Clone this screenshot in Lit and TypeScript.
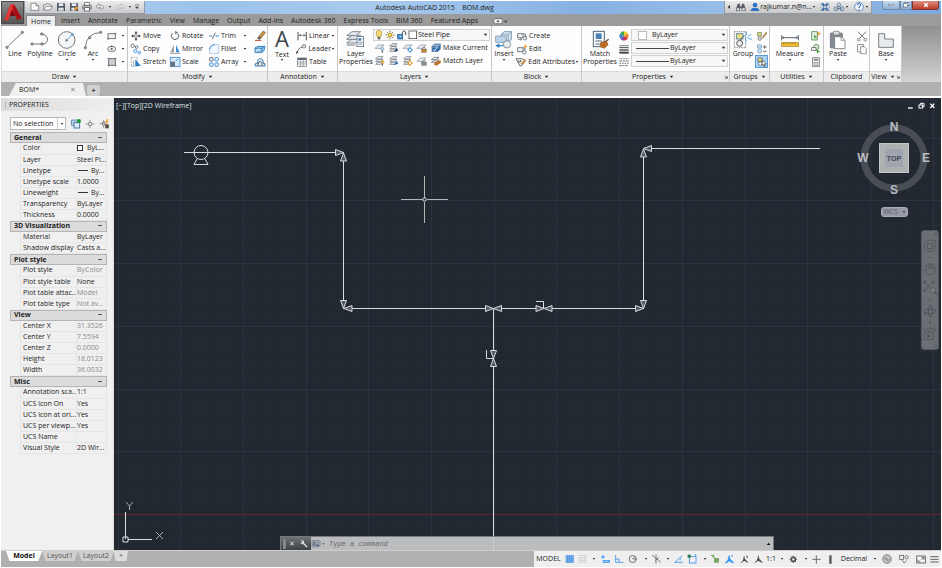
import { LitElement, html, svg, css } from "lit";
import { customElement, property } from "lit/decorators.js";
import { classMap } from "lit/directives/class-map.js";

/* ---------- icon artwork, drawn on a grid of three units per pixel ---------- */

type Art = [number, number, unknown];
const G = "#5d6670";
const B = "#3f8fd8";

const ICONS: Record<string, Art> = {
  logo: [60, 60, svg`<path d="M4 52 L22 6 Q28 0 34 6 L56 46 L42 50 L37 38 L20 40 L15 52Z" fill="#c5161d"/><path d="M22 6 Q28 0 34 6 L40 17 L27 20 L15 52 L4 52Z" fill="#e4383b"/><path d="M27 20 L20 40 L37 38Z" fill="#7d0d12"/><path d="M34 6 L56 46 L42 50 L28 12Z" fill="#a80f16"/>`],
  new: [30, 30, svg`<path d="M3 4H18L26 12V25H3Z" fill="#fff" stroke="#666" stroke-width="2"/><path d="M18 4V12H26" fill="none" stroke="#666" stroke-width="2"/>`],
  open: [30, 30, svg`<path d="M2 24V9L14 5L24 9V13" fill="#eee" stroke="#666" stroke-width="2"/><path d="M2 24L9 13H29L21 24Z" fill="#f8f8f8" stroke="#666" stroke-width="2"/>`],
  save: [30, 30, svg`<path d="M3 3H25L27 5V27H3Z" fill="#4d555f"/><rect x="8" y="4" width="14" height="8" fill="#eef"/><rect x="7" y="17" width="16" height="9" fill="#dfe3e8"/>`],
  saveas: [30, 30, svg`<path d="M3 3H25L27 5V27H3Z" fill="#4d555f"/><rect x="8" y="4" width="14" height="8" fill="#eef"/><rect x="7" y="17" width="12" height="9" fill="#dfe3e8"/><path d="M14 20L24 13L28 18L18 26Z" fill="#e89a3a"/>`],
  print: [30, 30, svg`<rect x="8" y="2" width="14" height="9" fill="#fff" stroke="#555" stroke-width="2"/><rect x="2" y="10" width="26" height="12" rx="3" fill="#bbb" stroke="#444" stroke-width="2"/><rect x="7" y="17" width="16" height="10" fill="#fff" stroke="#444" stroke-width="2"/>`],
  undo: [30, 30, svg`<path d="M12 5L3 13L12 21V16Q20 15 19 24Q28 20 25 14Q22 9 12 10Z" fill="#eee" stroke="#777" stroke-width="2"/>`],
  redo: [30, 30, svg`<path d="M18 5L27 13L18 21V16Q10 15 11 24Q2 20 5 14Q8 9 18 10Z" fill="#e5e5e5" stroke="#aaa" stroke-width="2"/>`],
  custom: [18, 30, svg`<path d="M3 9H15" stroke="#444" stroke-width="2"/><path d="M3 14H15L9 21Z" fill="#444"/>`],
  arrow: [12, 12, svg`<path d="M2 3H10L6 8Z" fill="#333"/>`],
  down: [15, 12, svg`<path d="M2 2H13L8 9Z" fill="#333"/>`],
  left: [12, 18, svg`<path d="M9 3V15L2 9Z" fill="#333"/>`],
  find: [36, 30, svg`<path d="M8 5H15V13H20V5H27L32 20V27H20V19H15V27H3V20Z" fill="#5c5f66"/><circle cx="9" cy="22" r="4" fill="#ddd"/><circle cx="26" cy="22" r="4" fill="#ddd"/>`],
  user: [30, 30, svg`<circle cx="15" cy="9" r="7" fill="#2a70c4"/><path d="M2 27Q2 17 15 17Q28 17 28 27Z" fill="#2a70c4"/>`],
  exchange: [30, 30, svg`<path d="M3 4H11L27 26H19Z M27 4H19L3 26H11Z" fill="#3a66a5"/><path d="M3 4V26M27 4V26" stroke="#8aa8d0" stroke-width="2"/>`],
  a360: [36, 30, svg`<g fill="none" stroke="#56749a" stroke-width="2.5"><circle cx="18" cy="8" r="5"/><circle cx="9" cy="20" r="6"/><circle cx="27" cy="20" r="6"/><path d="M18 13L9 20H27Z"/></g>`],
  help: [36, 36, svg`<circle cx="18" cy="17" r="13" fill="#f4f8ff" stroke="#4a79b8" stroke-width="2.5"/><path d="M13 13Q13 8 18 8Q23 8 23 13Q23 16 18 18V21M18 24V27" fill="none" stroke="#2e5fa3" stroke-width="3"/>`],
  winmin: [24, 18, svg`<rect x="5" y="7" width="14" height="4" fill="#fff" stroke="#678" stroke-width="1.5"/>`],
  winmax: [24, 18, svg`<g fill="#fff" stroke="#567" stroke-width="2"><rect x="8" y="1" width="13" height="10"/><rect x="4" y="5" width="12" height="10"/></g>`],
  winclose: [24, 18, svg`<path d="M7 4L17 14M17 4L7 14" stroke="#fff" stroke-width="4"/>`],
  ribbontoggle: [48, 24, svg`<rect x="2" y="5" width="26" height="15" rx="5" fill="#eee" stroke="#555" stroke-width="2"/><path d="M11 15H19L15 9Z" fill="#333"/><path d="M33 11H43L38 17Z" fill="#333"/>`],

  line: [60, 60, svg`<path d="M6 52L52 7" stroke="#5c5f66" stroke-width="2.5"/><circle cx="6" cy="52" r="3.5" fill="#aaa" stroke="#555" stroke-width="2"/><circle cx="52" cy="7" r="3.5" fill="#aaa" stroke="#555" stroke-width="2"/>`],
  polyline: [60, 60, svg`<path d="M6 42H40Q56 38 52 24Q47 12 35 12" fill="none" stroke="#5c5f66" stroke-width="2.5"/><g fill="#aaa" stroke="#555" stroke-width="2"><circle cx="6" cy="42" r="3.5"/><circle cx="36" cy="42" r="3.5"/><circle cx="35" cy="12" r="3.5"/></g>`],
  circle: [60, 60, svg`<circle cx="29" cy="30" r="25" fill="#f3f6f9" stroke="#777" stroke-width="3"/><path d="M29 30L46 14" stroke="${B}" stroke-width="2"/><circle cx="29" cy="31" r="4" fill="#888"/><circle cx="46" cy="14" r="4" fill="#5a9fdb"/>`],
  arc: [60, 60, svg`<path d="M7 53Q9 10 54 7" fill="none" stroke="#5c5f66" stroke-width="2.5"/><g fill="#aaa" stroke="#555" stroke-width="2"><circle cx="7" cy="53" r="3.5"/><circle cx="20" cy="23" r="3.5"/><circle cx="53" cy="7" r="3.5"/></g>`],
  rect: [36, 36, svg`<rect x="6" y="11" width="22" height="15" fill="#f0f0f0" stroke="${G}" stroke-width="2.5"/><circle cx="6" cy="26" r="3" fill="#777"/><circle cx="28" cy="11" r="3" fill="#777"/>`],
  ellipse: [36, 36, svg`<ellipse cx="17" cy="18" rx="12" ry="8" fill="#eee" stroke="${G}" stroke-width="2.5"/><circle cx="17" cy="18" r="3" fill="#555"/><circle cx="17" cy="10" r="2.5" fill="#555"/>`],
  hatch: [36, 36, svg`<rect x="8" y="8" width="20" height="20" fill="#d8dadd" stroke="#888" stroke-width="2"/><path d="M8 28L28 8M8 18L18 8M18 28L28 18" stroke="#a5a9ad" stroke-width="2"/><path d="M5 8H31M8 5V31M28 5V31M5 28H31" stroke="${G}" stroke-width="2"/>`],
  move: [36, 36, svg`<path d="M18 6V30M6 18H30" stroke="#4b5159" stroke-width="3"/><path d="M13 10L18 3L23 10ZM13 26L18 33L23 26ZM10 13L3 18L10 23ZM26 13L33 18L26 23Z" fill="#4b5159"/><rect x="15" y="15" width="6" height="6" fill="#fff" stroke="#555"/>`],
  rotate: [36, 36, svg`<path d="M10 10A11 11 0 1 0 26 10" fill="none" stroke="${G}" stroke-width="3"/><path d="M18 3L27 7L19 13Z" fill="${G}"/>`],
  trim: [36, 36, svg`<path d="M3 18H13M22 18H33" stroke="${B}" stroke-width="3"/><path d="M13 27L22 8" stroke="#555" stroke-width="2.5"/>`],
  erase: [36, 36, svg`<path d="M14 20L28 3L34 8L21 24Z" fill="#d8983f" stroke="#5b4632" stroke-width="2"/><path d="M14 20L21 24L17 29L9 25Z" fill="#555"/><path d="M3 31H22" stroke="#c53b1e" stroke-width="3"/>`],
  copy: [36, 36, svg`<g fill="#fff" stroke="${G}" stroke-width="2.5"><circle cx="8" cy="8" r="5"/><circle cx="20" cy="12" r="4"/></g><g fill="#e5f2fd" stroke="${B}" stroke-width="2.5"><circle cx="16" cy="24" r="5"/><circle cx="28" cy="29" r="4"/></g>`],
  mirror: [36, 36, svg`<path d="M15 5V28H4Z" fill="#9aa3ac"/><path d="M21 5V28H32Z" fill="${B}"/><path d="M3 31H33" stroke="#666" stroke-width="2"/>`],
  fillet: [36, 36, svg`<path d="M5 32V18Q7 5 21 5H32V32Z" fill="#f2f8fd" stroke="#9bbede" stroke-width="2"/><path d="M5 20Q6 6 21 5" fill="none" stroke="${B}" stroke-width="3"/>`],
  explode: [36, 36, svg`<path d="M3 15L11 10H33L30 23L22 29H3Z" fill="#8fc3ec" stroke="#2b76b8" stroke-width="2.5"/><path d="M3 16H24L32 10M24 16L22 28" stroke="#236ba9" stroke-width="2" fill="none"/><path d="M7 25Q12 14 19 22" stroke="#fff" stroke-width="3" fill="none"/>`],
  stretch: [36, 36, svg`<rect x="4" y="4" width="17" height="27" fill="#fff" stroke="#7c8792" stroke-width="2" stroke-dasharray="5 2"/><path d="M16 10V30H33Z" fill="#2f7fc7"/><path d="M11 14V30" stroke="#777" stroke-width="2"/>`],
  scale: [36, 36, svg`<rect x="4" y="4" width="29" height="28" fill="#d7eafa" stroke="${B}" stroke-width="2.5"/><rect x="4" y="17" width="14" height="15" fill="#687482"/><path d="M20 15L28 8" stroke="${B}" stroke-width="3"/>`],
  array: [36, 36, svg`<g fill="#fff" stroke-width="3"><rect x="5" y="5" width="10" height="10" rx="2" stroke="${G}"/><g stroke="${B}"><rect x="21" y="5" width="10" height="10" rx="2"/><rect x="5" y="21" width="10" height="10" rx="2"/><rect x="21" y="21" width="10" height="10" rx="2"/></g></g>`],
  offset: [36, 36, svg`<path d="M4 30V23H10Q10 8 20 8Q30 10 28 23H33V30Z" fill="#eaf3fb" stroke="#3b79b3" stroke-width="3"/><path d="M12 29V24Q14 16 20 16Q25 17 24 29" fill="none" stroke="#555" stroke-width="3"/>`],
  linear: [36, 36, svg`<path d="M6 6V31M31 6V31" stroke="#555" stroke-width="3"/><path d="M8 16H29" stroke="${G}" stroke-width="2"/><path d="M14 12L8 16L14 20M23 12L29 16L23 20" fill="${G}"/>`],
  leader: [36, 36, svg`<path d="M5 31Q10 14 22 12" fill="none" stroke="#555" stroke-width="2.5"/><circle cx="27" cy="10" r="5" fill="#fff" stroke="#555" stroke-width="2.5"/><path d="M3 33L5 24L11 28Z" fill="#444"/>`],
  table: [36, 36, svg`<rect x="5" y="6" width="26" height="25" fill="#fff" stroke="#666" stroke-width="2"/><rect x="5" y="6" width="26" height="6" fill="#5d6b7a"/><path d="M5 18H31M5 24H31M14 12V31M22 12V31" stroke="#888" stroke-width="2"/>`],
  layerprops: [72, 72, svg`<g fill="#e4e8ec" stroke="#6b7580" stroke-width="2.5"><path d="M8 45L24 33H50L36 45Z"/><path d="M8 34L24 22H50L36 34Z"/><path d="M8 23L24 11H50L36 23Z"/></g><path d="M8 51H34" stroke="#6b7580" stroke-width="3"/><rect x="39" y="26" width="20" height="30" fill="#f4f7fa" stroke="#4b5a6c" stroke-width="2"/><rect x="43" y="31" width="8" height="7" fill="#3d76b5"/><path d="M43 43H55M43 48H55M53 33H56" stroke="#69798b" stroke-width="2"/>`],
  bulb: [30, 36, svg`<path d="M8 18Q3 5 15 4Q26 6 22 18L19 24H11Z" fill="#f8dc75" stroke="#a58125" stroke-width="2"/><rect x="11" y="24" width="8" height="7" fill="#666"/>`],
  sun: [36, 36, svg`<circle cx="18" cy="18" r="6" fill="#f9dc52" stroke="#866a19" stroke-width="2"/><path d="M18 5V9M18 27V31M5 18H9M27 18H31M9 9L12 12M24 24L27 27M27 9L24 12M12 24L9 27" stroke="#866a19" stroke-width="2.5"/>`],
  lock: [36, 36, svg`<rect x="5" y="16" width="15" height="14" fill="#3f8fd8" stroke="#285a89" stroke-width="2"/><path d="M19 17V9Q24 2 29 9V18" fill="none" stroke="#555" stroke-width="3"/><circle cx="13" cy="23" r="2" fill="#fff"/>`],
  swatch: [30, 36, svg`<rect x="3" y="6" width="23" height="23" fill="#fff" stroke="#333" stroke-width="2"/>`],
  current: [36, 36, svg`<path d="M5 14L14 6H32L24 14Z" fill="#95b7d7" stroke="#2d5c8c" stroke-width="2"/><path d="M5 16H24V29H5ZM24 15L32 8V21L24 29Z" fill="#326da5"/><path d="M9 23L14 26L22 15" stroke="#fff" stroke-width="2.5" fill="none"/>`],
  matchlayer: [36, 36, svg`<g fill="#eceff2" stroke="#535b64" stroke-width="2"><path d="M4 22L13 15H27L18 22Z"/><path d="M4 14L13 7H27L18 14Z"/></g><path d="M14 22L31 16L33 23L20 32L12 29Z" fill="#bd752d"/>`],
  insert: [60, 60, svg`<path d="M22 13L31 5H52V29L43 36H22Z" fill="#dce8f3" stroke="#6988a7" stroke-width="2.5"/><path d="M22 13H43L52 5M43 13V36" fill="none" stroke="#6988a7" stroke-width="2"/><rect x="5" y="18" width="33" height="19" fill="#bad2e7" stroke="#7891a8" stroke-width="2"/><circle cx="39" cy="43" r="11" fill="#e6eaed" stroke="#74818e" stroke-width="2.5"/><path d="M4 47L16 40V45H28V49H16V54Z" fill="#2f7fc7"/>`],
  create: [36, 36, svg`<path d="M5 11H21V23H5ZM21 12H28V20H32" fill="#f0f4f7" stroke="${G}" stroke-width="2.5"/><circle cx="27" cy="25" r="5" fill="#fff" stroke="${G}" stroke-width="2.5"/><path d="M5 28H17M13 25L18 28L13 31" stroke="#555" stroke-width="2" fill="none"/>`],
  edit: [36, 36, svg`<path d="M5 14H21V26H5ZM21 15H27V23" fill="#f0f4f7" stroke="${G}" stroke-width="2.5"/><circle cx="25" cy="28" r="5" fill="#fff" stroke="${G}" stroke-width="2.5"/><path d="M28 3L30 8L35 10L30 12L28 17L26 12L21 10L26 8Z" fill="#f09a22"/>`],
  attrs: [36, 36, svg`<path d="M3 8H22L29 16L20 29H14Z" fill="#f4f4f4" stroke="#555" stroke-width="2.5"/><path d="M10 13L13 20M17 12L15 19" stroke="#333" stroke-width="2.5"/><path d="M18 23L28 10L33 13L23 26Z" fill="#d8a04c" stroke="#7c5820"/>`],
  matchprops: [60, 60, svg`<rect x="10" y="4" width="33" height="46" fill="#fafcfe" stroke="#52657a" stroke-width="3"/><rect x="17" y="10" width="18" height="17" fill="#4e81b6"/><path d="M16 33H36M16 42H28" stroke="#536a83" stroke-width="3"/><path d="M29 39L40 33L53 37L55 45L43 56L29 51Z" fill="#b76c2c"/><path d="M45 36L56 28" stroke="#65422a" stroke-width="4"/>`],
  wheel: [36, 36, svg`<path d="M18 18V4A14 14 0 0 1 30 11Z" fill="#f1ca35"/><path d="M18 18L30 11A14 14 0 0 1 30 25Z" fill="#e7842d"/><path d="M18 18L30 25A14 14 0 0 1 18 32Z" fill="#d13b4d"/><path d="M18 18V32A14 14 0 0 1 6 25Z" fill="#7d4db0"/><path d="M18 18L6 25A14 14 0 0 1 6 11Z" fill="#377bd0"/><path d="M18 18L6 11A14 14 0 0 1 18 4Z" fill="#43a84b"/>`],
  weights: [36, 36, svg`<path d="M4 8H32" stroke="#444" stroke-width="2"/><path d="M4 14H32" stroke="#444" stroke-width="3"/><path d="M4 21H32" stroke="#444" stroke-width="4"/><path d="M4 29H32" stroke="#444" stroke-width="6"/>`],
  types: [36, 36, svg`<g stroke="#777" stroke-width="3"><path d="M4 8H32" stroke-dasharray="3 2"/><path d="M4 15H32" stroke-dasharray="8 2"/><path d="M4 22H32" stroke-dasharray="5 3"/><path d="M4 29H32" stroke-dasharray="9 2 3 2"/></g>`],
  group: [60, 60, svg`<rect x="4" y="5" width="34" height="48" fill="none" stroke="#444" stroke-width="2" stroke-dasharray="4 3"/><rect x="10" y="11" width="20" height="16" fill="#eadf82" stroke="#527d9e" stroke-width="2.5"/><circle cx="20" cy="40" r="9" fill="#e9eef3" stroke="#555" stroke-width="3"/><path d="M22 30L33 17" stroke="#444" stroke-width="2.5"/><path d="M41 4V16M55 12L44 21M57 28L44 25M39 35L37 24M31 14L37 20" stroke="#5badeb" stroke-width="3"/>`],
  ungroup: [36, 36, svg`<rect x="5" y="8" width="11" height="10" fill="#dfe27a" stroke="#666" stroke-width="2"/><circle cx="11" cy="26" r="5" fill="#ddd" stroke="#555" stroke-width="2"/><path d="M18 23L30 6L33 9L21 25Z" fill="#ca8f3c" stroke="#555"/>`],
  groupedit: [36, 36, svg`<rect x="5" y="6" width="11" height="9" fill="#d4e7f7" stroke="#5289bb" stroke-width="2"/><circle cx="11" cy="24" r="6" fill="#d4e7f7" stroke="#5289bb" stroke-width="2"/><path d="M21 12H32M26 7V17M21 25H32" stroke="#555" stroke-width="2.5"/>`],
  groupsel: [36, 36, svg`<rect x="6" y="6" width="12" height="10" fill="#e9df85" stroke="#555" stroke-width="2"/><circle cx="13" cy="23" r="6" fill="#eee" stroke="#555" stroke-width="2"/><path d="M19 12L31 24H25L28 31H24L21 25L18 27Z" fill="#fff" stroke="#333" stroke-width="2"/>`],
  measure: [60, 60, svg`<path d="M5 15V31M55 15V31M6 23H54" stroke="#596673" stroke-width="3"/><path d="M12 19L6 23L12 27M48 19L54 23L48 27" fill="#596673"/><rect x="4" y="38" width="52" height="11" fill="#f1bf36" stroke="#a17a1c" stroke-width="2"/><path d="M11 38V43M18 38V43M25 38V43M32 38V43M39 38V43M46 38V43" stroke="#846417" stroke-width="2"/>`],
  quicksel: [36, 36, svg`<path d="M5 5H22V30H5Z" fill="#ebf5e7" stroke="#4b8a47" stroke-width="2.5"/><path d="M11 12L22 23H16L14 29Z" fill="#4a9b42"/><path d="M26 3L28 9L34 11L28 13L26 19L24 13L18 11L24 9Z" fill="#e99c2e"/>`],
  selectall: [36, 36, svg`<circle cx="19" cy="12" r="8" fill="#dcebd7" stroke="#558a50" stroke-width="2.5"/><rect x="5" y="14" width="13" height="9" fill="#eee" stroke="#555" stroke-width="2"/><path d="M18 17L31 27L25 28L22 33Z" fill="#4a9b42"/>`],
  calc: [36, 36, svg`<rect x="8" y="5" width="20" height="27" fill="#f4f4f4" stroke="#666" stroke-width="2"/><path d="M11 11H25" stroke="#777" stroke-width="5"/><path d="M11 19H25M11 24H25M11 29H25" stroke="#888" stroke-width="3" stroke-dasharray="4 1"/>`],
  paste: [60, 60, svg`<rect x="7" y="9" width="36" height="45" rx="3" fill="#858b92" stroke="#5d646c" stroke-width="2"/><rect x="16" y="4" width="18" height="11" rx="3" fill="#ddd" stroke="#666" stroke-width="2"/><path d="M20 20H39L51 31V56H20Z" fill="#fff" stroke="#777" stroke-width="2.5"/><path d="M39 20V31H51" fill="none" stroke="#777" stroke-width="2"/>`],
  cut: [36, 36, svg`<path d="M6 5L27 27M30 5L9 27" stroke="#555" stroke-width="2.5"/><circle cx="8" cy="29" r="4" fill="#fff" stroke="#555" stroke-width="2"/><circle cx="28" cy="29" r="4" fill="#fff" stroke="#555" stroke-width="2"/>`],
  copyclip: [36, 36, svg`<rect x="5" y="5" width="17" height="22" fill="#f5f5f5" stroke="#666" stroke-width="2"/><path d="M14 11H25L31 17V32H14Z" fill="#fff" stroke="#666" stroke-width="2"/>`],
  base: [60, 60, svg`<path d="M8 11H26V27H52V52H8Z" fill="#e8ebee" stroke="#777f88" stroke-width="3"/>`],

  launcher: [15, 15, svg`<path d="M2 2L9 9M10 3V10H3" fill="none" stroke="#333" stroke-width="2"/>`],
  pickadd: [36, 36, svg`<rect x="5" y="6" width="17" height="16" fill="#b9d3ea" stroke="#32679c" stroke-width="2"/><rect x="12" y="14" width="17" height="16" fill="#dcecf9" stroke="#32679c" stroke-width="2.5"/><circle cx="27" cy="9" r="6" fill="#179629"/>`],
  picksel: [36, 36, svg`<path d="M18 5V14M18 22V31M5 18H14M22 18H31" stroke="#666" stroke-width="2"/><rect x="14" y="14" width="8" height="8" fill="#eee" stroke="#666" stroke-width="2"/>`],
  quick: [36, 36, svg`<path d="M5 17H13M17 5V12M17 22V31" stroke="#666" stroke-width="2"/><rect x="13" y="13" width="8" height="8" fill="#eee" stroke="#555" stroke-width="2"/><path d="M27 3L21 13H26L22 21L33 10H28L31 3Z" fill="#f5a12b"/><rect x="22" y="19" width="10" height="12" fill="#4a4336"/>`],
  wrench: [30, 30, svg`<path d="M4 6Q10 1 15 7L15 12L25 22Q27 27 22 25L12 15Q5 17 4 10L9 11L10 7Z" fill="#ddd"/>`],
  prompt: [45, 30, svg`<rect x="2" y="4" width="26" height="20" rx="3" fill="#939cab" stroke="#7b8492"/><path d="M6 9L12 14L6 19M15 19H23" fill="none" stroke="#39404c" stroke-width="2.5"/><path d="M33 12H42L37 18Z" fill="#777"/>`],
  up: [15, 12, svg`<path d="M2 9H13L8 2Z" fill="#111"/>`],

  grid: [30, 30, svg`<rect x="2" y="3" width="25" height="24" fill="#7db4ee"/><path d="M8 3V27M14 3V27M20 3V27M2 9H27M2 15H27M2 21H27" stroke="#4a8fdb" stroke-width="1.5"/>`],
  snap: [30, 30, svg`<path d="M4 4V27M9 4V27M14 4V27M19 4V27M24 4V27" stroke="#8c8c8c" stroke-width="2" stroke-dasharray="2 3"/>`],
  infer: [33, 30, svg`<path d="M3 9H15M9 3V15" stroke="#3d9cf5" stroke-width="3"/><rect x="9" y="19" width="20" height="6" fill="#8fc3f7" stroke="#2e8fe9" stroke-width="2"/>`],
  ortho: [33, 30, svg`<path d="M5 3V25H28M5 15H15V25" fill="none" stroke="#3d8fe6" stroke-width="2.5"/>`],
  polar: [33, 30, svg`<circle cx="14" cy="15" r="10.5" fill="none" stroke="#555" stroke-width="2.5"/><path d="M14 15H28M14 15L21 7" stroke="#555" stroke-width="2"/>`],
  iso: [33, 30, svg`<path d="M3 3L30 25M15 1V29M24 10L12 20" stroke="#666" stroke-width="2.5"/>`],
  otrack: [33, 30, svg`<path d="M28 5L5 25H30" fill="none" stroke="#3d8fe6" stroke-width="2.5"/><path d="M22 11V19" stroke="#3d8fe6" stroke-width="2"/>`],
  osnap: [33, 30, svg`<rect x="7" y="7" width="20" height="20" fill="none" stroke="#3d8fe6" stroke-width="2.5"/><rect x="2" y="2" width="9" height="9" fill="#1e7d3e"/><path d="M26 0V8" stroke="#3d8fe6" stroke-width="2.5"/>`],
  trans: [33, 30, svg`<rect x="12" y="12" width="15" height="14" fill="#7ba564"/><path d="M4 4H12V11M4 4L13 13" stroke="#79a865" stroke-width="3" fill="none"/>`],
  annoblue: [33, 33, svg`<path d="M15 5L18 15L29 26Q22 27 16 20Q10 27 3 27Q12 22 13 15Z" fill="#2993f5" stroke="#2993f5" stroke-width="2"/><path d="M20 3H28L24 10Z" fill="#56aef7"/>`],
  anno: [33, 33, svg`<path d="M15 4L18 15L29 26Q22 26 16 20Q10 26 3 27Q12 22 13 15Z" fill="#4c4c4c"/><path d="M21 4L29 9L24 13Z" fill="#666"/>`],
  anno2: [33, 33, svg`<path d="M16 3L19 15L30 26Q22 26 16 20Q10 26 3 26Q12 22 13 15Z" fill="#4c4c4c"/>`],
  gear: [33, 33, svg`<circle cx="16" cy="16" r="6" fill="none" stroke="#555" stroke-width="5"/><path d="M16 5V9M16 23V27M5 16H9M23 16H27M8 8L11 11M21 21L24 24M24 8L21 11M11 21L8 24" stroke="#555" stroke-width="3"/>`],
  cross: [33, 33, svg`<path d="M16 4V29M4 16H29" stroke="#555" stroke-width="2.5"/>`],
  units: [33, 33, svg`<rect x="13" y="4" width="7" height="25" fill="#444"/><path d="M16 8H20M16 13H20M16 18H20M16 23H20" stroke="#ddd" stroke-width="1.5"/>`],
  iso2: [36, 36, svg`<circle cx="18" cy="18" r="13" fill="#c2c2c2" stroke="#777" stroke-width="2.5"/><path d="M11 15Q18 28 27 18M12 11L24 25" stroke="#777" stroke-width="2" fill="none"/>`],
  hardware: [36, 33, svg`<rect x="5" y="4" width="12" height="12" fill="none" stroke="#666" stroke-width="2.5"/><circle cx="26" cy="10" r="5" fill="none" stroke="#666" stroke-width="2.5"/><path d="M11 16L18 27L26 20" fill="none" stroke="#666" stroke-width="2.5"/>`],
  clean: [36, 33, svg`<rect x="5" y="6" width="26" height="21" fill="#f4f4f4" stroke="#555" stroke-width="2.5"/><path d="M20 10H27V17M16 23H9V17M27 10L19 17" fill="none" stroke="#555" stroke-width="2.5"/>`],
  menu: [33, 33, svg`<path d="M4 8H29M4 16H29M4 24H29" stroke="#444" stroke-width="2.5"/>`],

  vmin: [27, 24, svg`<path d="M6 18H20" stroke="#fff" stroke-width="4"/>`],
  vmax: [27, 24, svg`<path d="M10 8V4H21V14H18" fill="none" stroke="#fff" stroke-width="3"/><rect x="6" y="9" width="11" height="9" fill="none" stroke="#fff" stroke-width="3"/>`],
  vclose: [27, 24, svg`<path d="M7 5L19 18M19 5L7 18" stroke="#fff" stroke-width="4"/>`],
  navclose: [15, 12, svg`<circle cx="8" cy="6" r="4" fill="none" stroke="#4a4e55" stroke-width="1.5"/>`],
  navdot: [12, 9, svg`<path d="M3 3H9L6 7Z" fill="#33373d"/>`],
  steering: [48, 48, svg`<path d="M40 24A17 17 0 1 1 24 7H40Z" fill="none" stroke="#4a4e55" stroke-width="2"/><circle cx="24" cy="24" r="9" fill="none" stroke="#4a4e55" stroke-width="2.5"/>`],
  hand: [48, 48, svg`<path d="M14 40L5 26Q8 22 14 28L11 13Q14 9 17 14L20 23V8Q24 5 26 9L27 23L31 10Q35 8 36 13L34 25L40 19Q44 19 42 24L35 38Q28 44 14 40Z" fill="none" stroke="#4a4e55" stroke-width="2"/>`],
  zoom: [48, 48, svg`<path d="M6 7L36 37M36 7L6 37M6 14V7H13M29 7H36V14M6 30V37H13" fill="none" stroke="#4a4e55" stroke-width="2.5"/><circle cx="33" cy="34" r="8" fill="#797d82" stroke="#4a4e55" stroke-width="2"/><path d="M39 40L45 46" stroke="#4a4e55" stroke-width="4"/>`],
  orbit: [48, 48, svg`<ellipse cx="24" cy="25" rx="18" ry="7" fill="none" stroke="#4a4e55" stroke-width="2.5"/><ellipse cx="25" cy="24" rx="6" ry="18" fill="none" stroke="#4a4e55" stroke-width="2.5"/><path d="M4 30L13 27V35Z" fill="#4a4e55"/>`],
  motion: [48, 48, svg`<g fill="none" stroke="#4a4e55" stroke-width="2"><circle cx="11" cy="10" r="5"/><circle cx="24" cy="10" r="5"/><circle cx="37" cy="10" r="5"/><rect x="6" y="20" width="27" height="21"/></g><path d="M16 25L26 31L16 37Z" fill="#4a4e55"/>`],
};

/* layer tool icons: one sheet or a stack of sheets, with a badge */
const BADGES: Record<string, (c: string) => unknown> = {
  bulb: (c) => svg`<circle cx="25" cy="21" r="5" fill="${c}" stroke="#6b7580" stroke-width="1"/><path d="M25 26V32" stroke="#666" stroke-width="4"/>`,
  snow: (c) => svg`<circle cx="24" cy="24" r="5" fill="#fff" stroke="${c}" stroke-width="3"/><path d="M24 15V18M24 30V33M15 24H18M30 24H33" stroke="${c}" stroke-width="3"/>`,
  lock: (c) => svg`<path d="M20 23V19Q24 13 28 19V23" fill="none" stroke="#555" stroke-width="2.5"/><rect x="17" y="22" width="14" height="9" fill="${c}" stroke="#444" stroke-width="1"/>`,
  move: (c) => svg`<path d="M17 30L30 27L27 17Z" fill="${c}"/>`,
};
const layerTool = (stack: boolean, badge: string, color: string) => svg`
  ${stack
    ? svg`<g fill="#e9eef3" stroke="#5f6973" stroke-width="2"><path d="M5 28L12 21H27L20 28Z"/><path d="M5 20L12 13H27L20 20Z"/><path d="M5 12L12 5H27L20 12Z"/></g>`
    : svg`<path d="M3 19L13 9H30L21 19Z" fill="#e9eef3" stroke="#7c8791" stroke-width="2"/>`}
  ${BADGES[badge](color)}`;
const LAYER_TOOLS: [string, boolean, string, string][][] = [
  [["Off", false, "bulb", "#a9cdf0"], ["Isolate", true, "move", "#1f3f66"], ["Freeze", false, "snow", "#4a9ae0"], ["Lock", false, "lock", "#c9872a"]],
  [["On", true, "bulb", "#f3b53c"], ["Unisolate", true, "move", "#2b6caa"], ["Thaw", true, "snow", "#f0a02e"], ["Unlock", false, "lock", "#7d9a86"]],
];
LAYER_TOOLS.flat().forEach(([name, stack, badge, color]) => {
  ICONS["layer" + name] = [36, 36, layerTool(stack, badge, color)];
});

const icon = (name: string) => {
  const [w, h, art] = ICONS[name];
  return svg`<svg width=${w / 3} height=${h / 3} viewBox="0 0 ${w} ${h}" aria-hidden="true">${art}</svg>`;
};

const base = css`
  * { box-sizing: border-box; }
  svg { display: block; flex: none; }
  button, select, input {
    font: inherit; color: inherit; margin: 0; padding: 0; border: 0;
    background: none; border-radius: 0; appearance: none; outline-offset: -1px;
  }
  button { display: flex; align-items: center; justify-content: center; white-space: nowrap; }
`;

/* ---------- title bar ---------- */

@customElement("cad-titlebar")
class CadTitlebar extends LitElement {
  static styles = [base, css`
    :host { display: flex; height: 13px; background: linear-gradient(100deg, #b4d2f0, #9cc2ea 22%, #a8caee 40%, #86b1e3 62%, #9cc0ea 80%, #7ea9dc); }
    .group { display: flex; align-items: center; background: linear-gradient(#ececec, #c9c9c9); border: 1px solid #8e9aa8; border-top: 0; }
    .quick { margin-left: 23px; width: 121px; padding-left: 3px; }
    .quick button { width: 13px; }
    .quick .narrow { width: 7px; }
    h1 { flex: 1; margin: 0; font-size: 7px; font-weight: 400; line-height: 13px; text-align: center; color: #222; white-space: pre; }
    .info { width: 148px; justify-content: space-between; padding: 0 2px; }
    .win { display: flex; align-items: flex-start; margin: 0 2px 0 10px; }
    .win button { height: 9px; border: 1px solid #6f8cad; border-top: 0; background: linear-gradient(#c7dcf1, #8fb0d3); }
    .min { width: 18px; border-radius: 0 0 0 3px; }
    .max { width: 12px; }
    .win .close { width: 27px; border-color: #7a3a33; border-radius: 0 0 3px 0; background: linear-gradient(#dc9086, #bf3a25); }
  `];
  render() {
    return html`
      <div class="group quick">
        ${["new", "open", "save", "saveas", "print", "undo"].map((n) => html`<button aria-label=${n}>${icon(n)}</button>`)}
        <button class="narrow" aria-label="Undo list">${icon("arrow")}</button>
        <button aria-label="redo">${icon("redo")}</button>
        <button class="narrow" aria-label="Redo list">${icon("arrow")}</button>
        <button class="narrow" aria-label="Customize">${icon("custom")}</button>
      </div>
      <h1>Autodesk AutoCAD 2015    BOM.dwg</h1>
      <div class="group info">
        <button aria-label="Collapse search">${icon("left")}</button>
        <button aria-label="Search">${icon("find")}</button>
        <button>${icon("user")} rajkumar.n@n... ${icon("arrow")}</button>
        <button aria-label="Exchange Apps">${icon("exchange")}</button>
        <button aria-label="A360">${icon("a360")}${icon("arrow")}</button>
        <button aria-label="Help">${icon("help")}${icon("arrow")}</button>
      </div>
      <div class="win">
        <button class="min" aria-label="Minimize">${icon("winmin")}</button>
        <button class="max" aria-label="Restore">${icon("winmax")}</button>
        <button class="close" aria-label="Close">${icon("winclose")}</button>
      </div>`;
  }
}

/* ---------- ribbon ---------- */

const big = (name: string, lines: string[], cls: string, arrow = false) => html`
  <button class="big ${cls}">
    <span class="pic">${icon(name)}</span>
    ${lines.map((l) => html`<span class="lbl">${l}</span>`)}
    ${arrow ? icon("arrow") : ""}
  </button>`;

const small = (name: string, label = "", arrow = false) => html`
  <button class="small" aria-label=${label || name}>
    <span class="slot">${icon(name)}</span>${label ? html`<span>${label}</span>` : ""}
    ${arrow ? html`<span class="tail">${icon("arrow")}</span>` : ""}
  </button>`;

@customElement("ribbon-panel")
class RibbonPanel extends LitElement {
  @property() heading = "";
  @property({ type: Boolean }) plain = false;
  @property({ type: Boolean }) launch = false;
  static styles = [base, css`
    :host { display: flex; flex-direction: column; flex: none; border-right: 1px solid #c6c6c6; }
    .body { flex: 1; display: flex; padding: 3px 0 2px 1px; background: #fdfdfd; }
    .foot { display: flex; align-items: center; height: 11px; background: #ececec; border-top: 1px solid #dcdcdc; }
    .title { flex: 1; gap: 3px; line-height: 10px; }
  `];
  render() {
    return html`<div class="body"><slot></slot></div>
      <div class="foot">
        <button class="title">${this.heading}${this.plain ? "" : icon("down")}</button>
        ${this.launch ? html`<button aria-label="${this.heading} settings">${icon("launcher")}</button>` : ""}
      </div>`;
  }
}

@customElement("cad-ribbon")
class CadRibbon extends LitElement {
  static styles = [base, css`
    :host { display: block; }
    .tabs { display: flex; height: 12px; padding: 1px 0 0 25px; background: #9b9b9b; }
    .tabs button { padding: 0 4px; line-height: 11px; }
    .tabs .on { width: 30px; margin-right: 1px; background: #ececec; border: 1px solid #888; border-bottom: 0; border-radius: 2px 2px 0 0; }
    .tabs .toggle { margin-left: 7px; }
    .panels { display: flex; height: 56px; background: #dadada; padding-left: 1px; }
    .rest { flex: 1; background: linear-gradient(#909090, #b8b8b8 60%, #d4d4d4); }
    .big { flex-direction: column; justify-content: flex-start; height: 39px; }
    .pic { height: 21px; display: flex; align-items: center; }
    .letter { font-size: 22px; line-height: 20px; height: 20px; color: #3c434b; }
    .stack { justify-content: flex-start; }
    .stack .pic { height: 18px; margin-bottom: 4px; }
    .stack .lbl { line-height: 7px; }
    .lbl { line-height: 8px; }
    .col { display: flex; flex-direction: column; }
    .push { margin-left: 4px; }
    .small { height: 13px; justify-content: flex-start; }
    .slot { width: 13px; display: flex; justify-content: center; margin-right: 1px; }
    .tail { margin-left: auto; padding-right: 2px; }
    .small.on { width: 13px; justify-content: center; background: #a9d0f5; border: 1px solid #5b9bd8; }
    .w22 { width: 22px; } .w24 { width: 24px; } .w26 { width: 26px; } .w28 { width: 28px; }
    .w30 { width: 30px; } .w34 { width: 34px; } .w38 { width: 38px; }
    .c22 { width: 22px; } .c14 { width: 14px; } .c39 { width: 39px; } .c42 { width: 42px; } .c66 { width: 66px; }
    .c118 { width: 118px; padding-right: 1px; }
    .c98 { width: 98px; gap: 1px; padding-right: 1px; }
    .row { display: flex; height: 13px; }
    .combo { display: flex; align-items: center; height: 12px; border: 1px solid #d2d2d2; background: #f7f7f7; position: relative; }
    .combo select { flex: 1; min-width: 0; height: 10px; line-height: 10px; padding-right: 8px; text-overflow: ellipsis; }
    .combo .drop { position: absolute; right: 1px; top: 3px; pointer-events: none; }
    .box { width: 9px; height: 9px; margin: 0 5px 0 6px; border: 1px solid #bbb; background: #fff; }
    .dash { width: 33px; height: 1px; margin: 0 1px 0 4px; background: #444; }
  `];
  private combo(label: string, value: string, lead: unknown) {
    return html`<label class="combo">${lead}<select aria-label=${label}><option>${value}</option></select><span class="drop">${icon("down")}</span></label>`;
  }
  render() {
    const tabs = ["Home", "Insert", "Annotate", "Parametric", "View", "Manage", "Output", "Add-ins", "Autodesk 360", "Express Tools", "BIM 360", "Featured Apps"];
    const dash = html`<span class="dash"></span>`;
    return html`
      <nav class="tabs">
        ${tabs.map((t, i) => html`<button class=${classMap({ on: i === 0 })}>${t}</button>`)}
        <button class="toggle" aria-label="Ribbon display">${icon("ribbontoggle")}</button>
      </nav>
      <div class="panels">
        <ribbon-panel heading="Draw">
          ${big("line", ["Line"], "w24")}${big("polyline", ["Polyline"], "w26")}
          ${big("circle", ["Circle"], "w28", true)}${big("arc", ["Arc"], "w24", true)}
          <div class="col c22">${small("rect", "", true)}${small("ellipse", "", true)}${small("hatch", "", true)}</div>
        </ribbon-panel>
        <ribbon-panel heading="Modify">
          <div class="col c39">${small("move", "Move")}${small("copy", "Copy")}${small("stretch", "Stretch")}</div>
          <div class="col c39">${small("rotate", "Rotate")}${small("mirror", "Mirror")}${small("scale", "Scale")}</div>
          <div class="col c42">${small("trim", "Trim", true)}${small("fillet", "Fillet", true)}${small("array", "Array", true)}</div>
          <div class="col c14 push">${small("erase")}${small("explode")}${small("offset")}</div>
        </ribbon-panel>
        <ribbon-panel heading="Annotation">
          <button class="big w26 stack"><span class="pic"><span class="letter">A</span></span><span class="lbl">Text</span>${icon("arrow")}</button>
          <div class="col c42">${small("linear", "Linear", true)}${small("leader", "Leader", true)}${small("table", "Table")}</div>
        </ribbon-panel>
        <ribbon-panel heading="Layers">
          ${big("layerprops", ["Layer", "Properties"], "w34")}
          <div class="col c118">
            ${this.combo("Layer", "Steel Pipe", html`${icon("bulb")}${icon("sun")}${icon("lock")}${icon("swatch")}`)}
            ${LAYER_TOOLS.map((r, i) => html`<div class="row">
              ${r.map(([n]) => small("layer" + n))}${i ? small("matchlayer", "Match Layer") : small("current", "Make Current")}</div>`)}
          </div>
        </ribbon-panel>
        <ribbon-panel heading="Block">
          ${big("insert", ["Insert"], "w22", true)}
          <div class="col c66">${small("create", "Create")}${small("edit", "Edit")}${small("attrs", "Edit Attributes", true)}</div>
        </ribbon-panel>
        <ribbon-panel heading="Properties" launch>
          ${big("matchprops", ["Match", "Properties"], "w34")}
          <div class="col c14">${small("wheel")}${small("weights")}${small("types")}</div>
          <div class="col c98">
            ${this.combo("Object color", "ByLayer", html`<span class="box"></span>`)}
            ${this.combo("Lineweight", "ByLayer", dash)}${this.combo("Linetype", "ByLayer", dash)}
          </div>
        </ribbon-panel>
        <ribbon-panel heading="Groups">
          ${big("group", ["Group"], "w24")}
          <div class="col c14">${small("ungroup")}${small("groupedit")}
            <button class="small on" aria-label="Group selection">${icon("groupsel")}</button></div>
        </ribbon-panel>
        <ribbon-panel heading="Utilities">
          ${big("measure", ["Measure"], "w38", true)}
          <div class="col c14">${small("quicksel")}${small("selectall")}${small("calc")}</div>
        </ribbon-panel>
        <ribbon-panel heading="Clipboard" plain>
          ${big("paste", ["Paste"], "w26", true)}
          <div class="col c14 push">${small("cut")}${small("copyclip")}</div>
        </ribbon-panel>
        <ribbon-panel heading="View" launch>${big("base", ["Base"], "w30", true)}</ribbon-panel>
        <div class="rest"></div>
      </div>`;
  }
}

/* ---------- properties palette ---------- */

const SECTIONS: [string, [string, string, string?][]][] = [
  ["General", [["Color", "ByL...", "box"], ["Layer", "Steel Pi..."], ["Linetype", "By...", "dash"], ["Linetype scale", "1.0000"], ["Lineweight", "By...", "dash"], ["Transparency", "ByLayer"], ["Thickness", "0.0000"]]],
  ["3D Visualization", [["Material", "ByLayer"], ["Shadow display", "Casts a..."]]],
  ["Plot style", [["Plot style", "ByColor", "dim"], ["Plot style table", "None"], ["Plot table attac...", "Model", "dim"], ["Plot table type", "Not av...", "dim"]]],
  ["View", [["Center X", "31.3526", "dim"], ["Center Y", "7.5594", "dim"], ["Center Z", "0.0000", "dim"], ["Height", "18.0123", "dim"], ["Width", "36.0032", "dim"]]],
  ["Misc", [["Annotation sca...", "1:1"], ["UCS icon On", "Yes"], ["UCS icon at ori...", "Yes"], ["UCS per viewp...", "Yes"], ["UCS Name", ""], ["Visual Style", "2D Wir..."]]],
];

@customElement("cad-properties")
class CadProperties extends LitElement {
  static styles = [base, css`
    :host { display: block; width: 113px; flex: none; background: #f0f0f0; border-right: 1px solid #dedede; }
    h2 { margin: 0 0 6px; padding-left: 4px; display: flex; align-items: center; gap: 3px; height: 13px; font-size: 7px; font-weight: 400; background: linear-gradient(90deg, #dcdcdc, #eeeeee); }
    h2::before { content: ""; width: 1px; height: 8px; background: #bbb; }
    .pick { display: flex; align-items: center; height: 13px; margin: 0 0 2px 9px; }
    .sel { position: relative; width: 56px; height: 13px; margin-right: 3px; border: 1px solid #b9b9b9; background: #fff; display: flex; }
    .sel select { flex: 1; padding-left: 2px; height: 11px; line-height: 11px; }
    .sel .drop { position: absolute; right: 0; top: 0; width: 8px; height: 11px; border-left: 1px solid #ccc; display: flex; align-items: center; justify-content: center; pointer-events: none; }
    .pick button { width: 14px; height: 13px; }
    .head { width: 97px; height: 11px; margin-left: 9px; padding: 0 4px 0 3px; justify-content: space-between; font-weight: 700; background: #dcdcdc; border: 1px solid #b4b4b4; }
    table { width: 87px; margin-left: 19px; border-collapse: collapse; table-layout: fixed; }
    th, td { height: 11px; line-height: 10px; padding: 0 0 0 2px; font-weight: 400; text-align: left; border: 1px solid #e6e6e6; border-top: 0; white-space: nowrap; overflow: hidden; }
    th { width: 56px; }
    td { padding: 0; }
    .dim { color: #8a8a8a; }
    .box, .dash { display: inline-block; vertical-align: middle; }
    .box { width: 6px; height: 6px; margin-right: 4px; border: 1px solid #333; background: #fff; }
    .dash { width: 10px; height: 1px; margin: 0 3px 0 1px; background: #333; }
  `];
  render() {
    return html`
      <h2>PROPERTIES</h2>
      <div class="pick">
        <label class="sel"><select aria-label="Selection"><option>No selection</option></select><span class="drop">${icon("arrow")}</span></label>
        ${["pickadd", "picksel", "quick"].map((n) => html`<button aria-label=${n}>${icon(n)}</button>`)}
      </div>
      ${SECTIONS.map(([name, rows]) => html`
        <button class="head">${name}<span>−</span></button>
        <table aria-label=${name}>
          ${rows.map(([k, v, kind]) => html`<tr><th scope="row">${k}</th>
            <td class=${classMap({ dim: kind === "dim" })}>${kind === "box" || kind === "dash" ? html`<span class=${kind}></span>` : ""}${v}</td></tr>`)}
        </table>`)}`;
  }
}

/* ---------- drawing area ---------- */

const STEP = 62.7;

@customElement("cad-canvas")
class CadCanvas extends LitElement {
  static styles = [base, css`
    :host { display: block; position: relative; flex: 1; min-width: 0; overflow: hidden; background: #212830; color: #dfe2e5; }
    .sheet { position: absolute; inset: 0; width: 100%; height: 100%; }
    .minor { stroke: #252c37; shape-rendering: crispEdges; }
    .major { stroke: #2b3343; shape-rendering: crispEdges; }
    .axis { stroke: #67222a; shape-rendering: crispEdges; }
    .pipe { stroke: #d9dcdf; fill: none; }
    .arrowhead { stroke: #d9dcdf; fill: #565c64; }
    .vp { position: absolute; left: 2px; top: 3px; line-height: 10px; display: flex; }
    .vpwin { position: absolute; right: 4px; top: 4px; display: flex; gap: 2px; }
    .cube { position: absolute; right: 9px; top: 22px; }
    .cube text { font: 700 12px "Liberation Sans", sans-serif; fill: #b9bcc0; text-anchor: middle; }
    .cube .top { font-size: 7px; fill: #3e4656; }
    .wcs { position: absolute; right: 33px; top: 109px; width: 27px; height: 10px; border-radius: 3px; background: #9699a5; border: 1px solid #a9acb6; color: #555c6c; gap: 4px; }
    .nav { position: absolute; right: 2px; top: 132px; width: 18px; height: 120px; padding: 1px 0; border-radius: 3px; background: #6b6f74; border: 1px solid #54585e; display: flex; flex-direction: column; align-items: center; justify-content: space-between; }
    .nav .last { align-self: flex-end; }
    .cmd { position: absolute; left: 166px; right: 167px; bottom: 0; height: 14px; display: flex; border: 1px solid #777b80; border-bottom: 0; background: rgba(203, 204, 206, 0.9); }
    .tools { display: flex; align-items: center; width: 30px; padding-left: 2px; background: linear-gradient(#6f7174, #3d4044); color: #ddd; }
    .tools::before { content: ""; width: 3px; height: 10px; background: #85878a; }
    .tools button { width: 12px; }
    .cmd input { flex: 1; min-width: 0; font-family: "Liberation Mono", monospace; font-style: italic; padding-left: 3px; color: #333; }
    .cmd input::placeholder { color: #6a6c70; }
    .cmd .up { width: 9px; }
  `];
  private grid() {
    const lines = [];
    for (let pass = 0; pass < 2; pass++) {
      for (let i = 0; i < 200; i++) {
        const major = i % 5 === 0;
        if (major !== (pass === 1)) continue;
        const x = Math.round(3.5 + (i * STEP) / 5) + 0.5;
        const y = Math.round(-23 + (i * STEP) / 5) + 0.5;
        const cls = major ? "major" : "minor";
        lines.push(svg`<line class=${cls} x1=${x} y1="0" x2=${x} y2="100%"/><line class=${cls} x1="0" y1=${y} x2="100%" y2=${y}/>`);
      }
    }
    return lines;
  }
  /* arrowhead whose tip is at x,y and which points along the given angle */
  private head(x: number, y: number, angle: number) {
    return svg`<path class="arrowhead" d="M0 0L-8 -3V3Z" transform="translate(${x} ${y}) rotate(${angle})"/>`;
  }
  render() {
    return html`
      <svg class="sheet" role="img" aria-label="Piping drawing">
        ${this.grid()}
        <line class="axis" x1="0" y1="416.5" x2="100%" y2="416.5"/>
        <g class="pipe">
          <path d="M70 54.5H229.5V210.5H529.5V50.5H706"/>
          <path d="M379.5 210.5V1000"/>
          <circle cx="87" cy="54.5" r="7"/>
          <path d="M83 61L80 66.5H94L91 61"/>
          <path d="M422 203.5H429.5V210M372.5 252V260.5H379"/>
          <path d="M287 101.5H309M313 101.5H334M310.5 78V100M310.5 104V125M309 100H312V103H309Z" stroke-opacity=".8"/>
          <path d="M11.5 414V441M14 441.5H38M9 439H14V444H9Z"/>
          <path d="M12 404L15.500 408L19 404M15.500 408V412M42 434L49 441M49 434L42 441" stroke="#a9adb2"/>
        </g>
        ${this.head(229.5, 54.5, 0)}${this.head(229.5, 55, -90)}
        ${this.head(229.5, 210.5, 90)}${this.head(230, 210.5, 180)}
        ${this.head(379.5, 210.5, 0)}${this.head(379.5, 210.5, 180)}
        ${this.head(430, 210.5, 0)}${this.head(430, 210.5, 180)}
        ${this.head(529.5, 210.5, 0)}${this.head(529.5, 210.5, 90)}
        ${this.head(529.5, 51, -90)}${this.head(529.5, 50.5, 180)}
        ${this.head(379.5, 260.5, 90)}${this.head(379.5, 260.5, -90)}
      </svg>
      <div class="vp"><button>[−]</button><button>[Top]</button><button>[2D Wireframe]</button></div>
      <div class="vpwin">
        <button aria-label="Minimize">${icon("vmin")}</button><button aria-label="Restore">${icon("vmax")}</button><button aria-label="Close">${icon("vclose")}</button>
      </div>
      <svg class="cube" width="76" height="76" viewBox="0 0 76 76" role="img" aria-label="ViewCube">
        <circle cx="38" cy="38" r="30" fill="none" stroke="#494e56" stroke-width="7"/>
        <rect x="23.500" y="23.500" width="29" height="29" fill="#aeb1b1" stroke="#c5c7c5"/>
        <rect x="29" y="29" width="18" height="18" fill="#a0a4ae"/>
        <text class="top" x="38" y="41">TOP</text>
        <text x="38" y="11">N</text><text x="38" y="74">S</text><text x="7" y="42">W</text><text x="70" y="42">E</text>
      </svg>
      <button class="wcs">WCS${icon("arrow")}</button>
      <div class="nav">
        <span class="last">${icon("navclose")}</span>
        <button aria-label="SteeringWheel">${icon("steering")}</button>${icon("navdot")}
        <button aria-label="Pan">${icon("hand")}</button>
        <button aria-label="Zoom">${icon("zoom")}</button>${icon("navdot")}
        <button aria-label="Orbit">${icon("orbit")}</button>${icon("navdot")}
        <button aria-label="ShowMotion">${icon("motion")}</button>
        <span class="last">${icon("navclose")}</span>
      </div>
      <div class="cmd">
        <div class="tools"><button aria-label="Close command line">✕</button><button aria-label="Customize">${icon("wrench")}</button></div>
        <button aria-label="Recent commands">${icon("prompt")}</button>
        <input aria-label="Command" placeholder="Type a command">
        <button class="up" aria-label="History">${icon("up")}</button>
      </div>`;
  }
}

/* ---------- bottom bar ---------- */

@customElement("cad-status")
class CadStatus extends LitElement {
  static styles = [base, css`
    :host { display: flex; justify-content: space-between; height: 18px; background: #b0b0b0; border-top: 1px solid #cfcfcf; border-bottom: 1px solid #fff; }
    .layouts { display: flex; padding-left: 5px; height: 10px; }
    .layouts button { width: 36px; height: 10px; background: #cfcfcf; color: #555; clip-path: polygon(0 0, 100% 0, 90% 100%, 10% 100%); }
    .layouts .on { background: #fff; color: #111; font-weight: 700; }
    .layouts .plus { width: 14px; background: #ddd; }
    .bar { display: flex; align-items: center; background: #efefef; color: #222; }
    .bar button { height: 16px; }
    .model { width: 29px; }
    .n { width: 13px; } .m { width: 15px; } .a { width: 9px; } .l { width: 19px; }
    .ratio { width: 12px; } .unit { width: 32px; }
  `];
  render() {
    const items: [string, string][] = [
      ["grid", "n"], ["snap", "n"], ["arrow", "a"], ["infer", "m"], ["ortho", "n"], ["polar", "m"], ["arrow", "a"], ["iso", "n"], ["arrow", "a"],
      ["otrack", "n"], ["osnap", "m"], ["arrow", "a"], ["trans", "n"], ["annoblue", "m"], ["anno", "m"], ["anno2", "n"],
      ["1:1", "ratio"], ["arrow", "a"], ["gear", "m"], ["arrow", "a"], ["cross", "n"], ["units", "m"], ["Decimal", "unit"], ["arrow", "a"],
      ["iso2", "m"], ["hardware", "l"], ["clean", "m"], ["menu", "n"],
    ];
    return html`
      <nav class="layouts"><button class="on">Model</button><button>Layout1</button><button>Layout2</button><button class="plus" aria-label="New layout">+</button></nav>
      <div class="bar">
        <button class="model">MODEL</button>
        ${items.map(([n, c]) => html`<button class=${c} aria-label=${n}>${ICONS[n] ? icon(n) : n}</button>`)}
      </div>`;
  }
}

/* ---------- shell ---------- */

@customElement("app-root")
class AppRoot extends LitElement {
  static styles = [base, css`
    :host { position: relative; display: flex; flex-direction: column; min-height: 100vh; padding: 1px 1px 0; box-sizing: border-box; background: #fff; font: 7px/10px "Open Sans", "Noto Sans", sans-serif; color: #222; }
    .app { position: absolute; left: 1px; top: 1px; width: 23px; height: 23px; background: linear-gradient(#8e8e8e, #555); border: 1px solid #4a4a4a; }
    .docs { display: flex; align-items: flex-end; height: 14px; padding-left: 8px; background: #b1b1b1; margin-bottom: 2px; }
    .doc { height: 13px; width: 77px; padding: 0 10px; justify-content: space-between; background: #f0f0f0; clip-path: polygon(9% 0, 96% 0, 100% 100%, 0 100%); }
    .doc .x { color: #888; }
    .add { width: 13px; height: 11px; margin-left: 1px; border-radius: 3px; background: #d2d2d2; color: #333; font-weight: 700; }
    main { flex: 1; display: flex; }
  `];
  render() {
    return html`
      <cad-titlebar></cad-titlebar>
      <cad-ribbon></cad-ribbon>
      <button class="app" aria-label="Application menu">${icon("logo")}</button>
      <div class="docs">
        <button class="doc">BOM*<span class="x">✕</span></button>
        <button class="add" aria-label="New drawing">+</button>
      </div>
      <main><cad-properties></cad-properties><cad-canvas></cad-canvas></main>
      <cad-status></cad-status>`;
  }
}
